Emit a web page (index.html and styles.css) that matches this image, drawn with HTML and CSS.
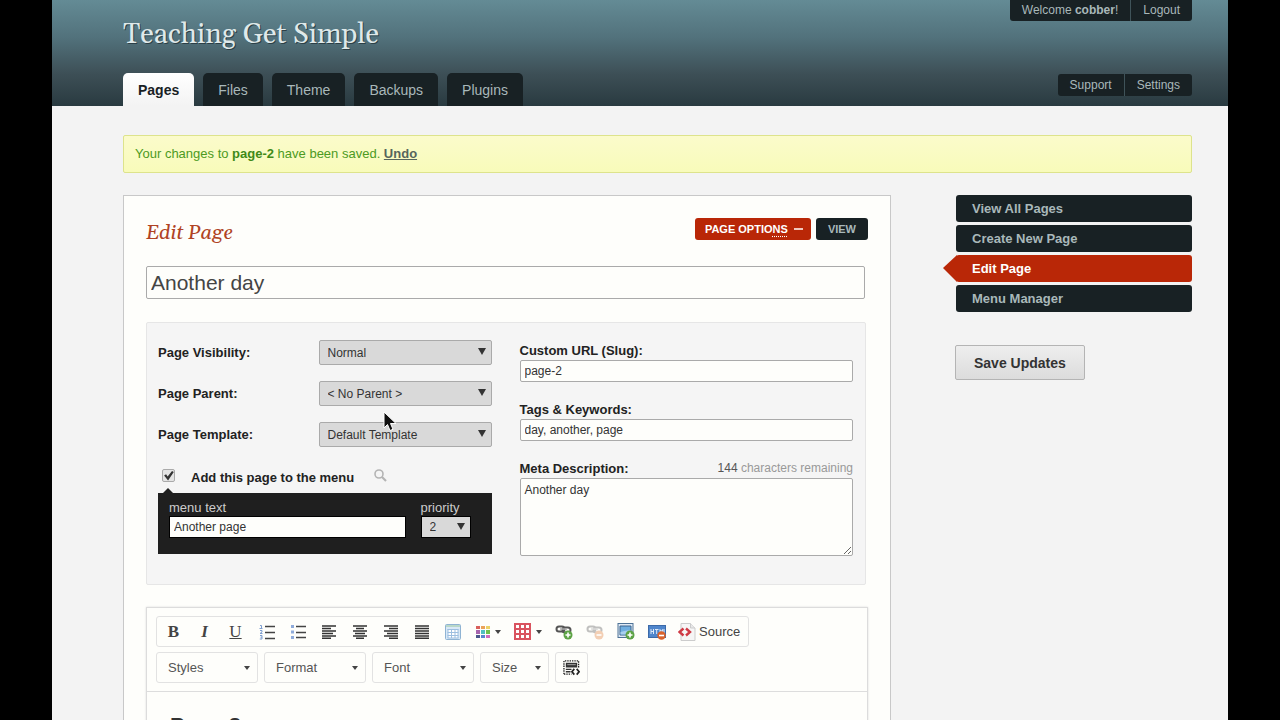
FILE: index.html
```html
<!DOCTYPE html>
<html lang="en">
<head>
  <meta charset="UTF-8" />
  <meta name="viewport" content="width=device-width, initial-scale=1.0"/>
  <title>Edit Page - Teaching Get Simple</title>
  <link rel="stylesheet" href="styles.css">
</head>
<body>
  <header class="header">
    <div class="header-left">
      <h1>Teaching Get Simple</h1>
      <nav class="tabs">
        <a class="current" href="#">Pages</a>
        <a href="#">Files</a>
        <a href="#">Theme</a>
        <a href="#">Backups</a>
        <a href="#">Plugins</a>
      </nav>
    </div>
    <div class="header-right">
      <div class="pill user">
        <span>Welcome <strong>cobber</strong>!</span>
        <a href="#">Logout</a>
      </div>
      <div class="pill links">
        <a href="#">Support</a>
        <a href="#">Settings</a>
      </div>
    </div>
  </header>

  <div class="content">
    <p class="updated">Your changes to <b>page-2</b> have been saved. <a href="#">Undo</a></p>

    <div class="columns">
      <main class="main">
        <div class="main-head">
          <h2>Edit Page</h2>
          <div class="edit-nav">
            <a class="current" href="#">PAGE OPTIO<em>NS</em> <span class="minus"></span></a>
            <a href="#">VIEW</a>
          </div>
        </div>

        <input class="text title" type="text" aria-label="Page title" value="Another day" />

        <div class="options">
          <div class="left-opt">
            <div class="field">
              <label for="private">Page Visibility:</label>
              <span class="select"><select id="private"><option>Normal</option><option>Private</option></select></span>
            </div>
            <div class="field">
              <label for="parent">Page Parent:</label>
              <span class="select"><select id="parent"><option>&lt; No Parent &gt;</option></select></span>
            </div>
            <div class="field">
              <label for="template">Page Template:</label>
              <span class="select"><select id="template"><option>Default Template</option></select></span>
            </div>
            <div class="menu-check">
              <input type="checkbox" id="menu-enable" checked />
              <label for="menu-enable">Add this page to the menu</label>
              <a href="#" aria-label="View menu">
                <svg width="13" height="13" viewBox="0 0 13 13" fill="none" stroke="#b4b4b4"><circle cx="5" cy="5" r="4" stroke-width="1.6"/><path d="M8 8l4 4" stroke-width="2.2"/></svg>
              </a>
            </div>
            <div class="menu-items">
              <div class="menu-text">
                <label for="menu">menu text</label>
                <input class="text" type="text" id="menu" value="Another page" />
              </div>
              <div class="menu-order">
                <label for="order">priority</label>
                <span class="select"><select id="order"><option>2</option></select></span>
              </div>
            </div>
          </div>

          <div class="right-opt">
            <div class="field">
              <label for="slug">Custom URL (Slug):</label>
              <input class="text" type="text" id="slug" value="page-2" />
            </div>
            <div class="field">
              <label for="tags">Tags &amp; Keywords:</label>
              <input class="text" type="text" id="tags" value="day, another, page" />
            </div>
            <div class="field">
              <div class="label-row">
                <label for="meta">Meta Description:</label>
                <span class="countdown"><b>144</b> characters remaining</span>
              </div>
              <textarea class="text" id="meta">Another day</textarea>
            </div>
          </div>
        </div>

        <div class="editor">
          <div class="toolbar">
            <div class="group">
              <button class="tool serif bold" type="button">B</button>
              <button class="tool serif italic" type="button">I</button>
              <button class="tool serif underline" type="button">U</button>
              <button class="tool" type="button" aria-label="Numbered list">
                <svg width="16" height="16" viewBox="0 0 16 16"><path d="M6 2.5h10M6 8.5h10M6 14.5h10" stroke="#444" stroke-width="1.3"/><path d="M1 1.5h1.500v3M.5 4.500h3M1 6.500h2v1.500L1 9.500h2.500M1 11.500h2v3.500H.8M1.500 13.200H3" fill="none" stroke="#7f9fd0"/></svg>
              </button>
              <button class="tool" type="button" aria-label="Bulleted list">
                <svg width="16" height="16" viewBox="0 0 16 16"><path d="M6 2.5h10M6 8.5h10M6 13.5h10" stroke="#444" stroke-width="1.3"/><path d="M1 1h3v3H1zM1 6.500h3v3H1zM1 12h3v3H1z" fill="#8fabdb"/></svg>
              </button>
              <button class="tool" type="button" aria-label="Align left">
                <svg width="14" height="14" viewBox="0 0 14 14" stroke="#333" stroke-width="1.5"><path d="M0 1h14M0 3.500h9M0 6h14M0 8.500h11M0 11h14M0 13.300h9"/></svg>
              </button>
              <button class="tool" type="button" aria-label="Center">
                <svg width="14" height="14" viewBox="0 0 14 14" stroke="#333" stroke-width="1.5"><path d="M0 1h14M3 3.500h8M0 6h14M2 8.500h10M0 11h14M3 13.300h8"/></svg>
              </button>
              <button class="tool" type="button" aria-label="Align right">
                <svg width="14" height="14" viewBox="0 0 14 14" stroke="#333" stroke-width="1.5"><path d="M0 1h14M5 3.500h9M0 6h14M3 8.500h11M0 11h14M5 13.300h9"/></svg>
              </button>
              <button class="tool" type="button" aria-label="Justify">
                <svg width="14" height="14" viewBox="0 0 14 14" stroke="#333" stroke-width="1.5"><path d="M0 1h14M0 3.500h14M0 6h14M0 8.500h14M0 11h14M0 13.300h14"/></svg>
              </button>
              <button class="tool" type="button" aria-label="Table">
                <svg width="16" height="16" viewBox="0 0 16 16"><rect x=".5" y=".5" width="15" height="15" rx="1" fill="#d9e9f7" stroke="#8fb3d3"/><path d="M1 1h14v2H1z" fill="#b9d8c8"/><path d="M3 5h10v9H3z" fill="#fff"/><path d="M2.500 5.500h11M2.500 8.500h11M2.500 11.500h11M2.500 14h11M3 5v9M6.500 5v9M10 5v9M13 5v9" stroke="#9dbfe0" fill="none"/></svg>
              </button>
              <button class="tool wide" type="button" aria-label="Text color">
                <svg width="14" height="14" viewBox="0 0 14 14"><path fill="#d9605c" d="M0 1h4v3H0z"/><path fill="#eba35a" d="M5 1h4v3H5z"/><path fill="#ecd268" d="M10 1h4v3h-4z"/><path fill="#a564ad" d="M0 5h4v4H0z"/><path fill="#52bfc0" d="M5 5h4v4H5z"/><path fill="#71c04e" d="M10 5h4v4h-4z"/><path fill="#4a558a" d="M0 10h4v3H0z"/><path fill="#5b83d0" d="M5 10h4v3H5z"/><path fill="#d06bbd" d="M10 10h4v3h-4z"/></svg>
                <i class="caret"></i>
              </button>
              <button class="tool wide" type="button" aria-label="Background color">
                <svg width="17" height="17" viewBox="0 0 17 17"><path fill="#d9535f" d="M0 0h17v17H0z"/><path fill="#fff" d="M2 2h3v3H2zM7 2h3v3H7zM12 2h3v3h-3zM2 7h3v3H2zM7 7h3v3H7zM12 7h3v3h-3zM2 12h3v3H2zM7 12h3v3H7zM12 12h3v3h-3z"/></svg>
                <i class="caret"></i>
              </button>
              <button class="tool" type="button" aria-label="Link">
                <svg width="18" height="16" viewBox="0 0 18 16"><g fill="none" stroke="#555" stroke-width="2"><rect x="1.500" y="2.500" width="8" height="5" rx="2.500"/><rect x="7.500" y="3.500" width="8" height="5" rx="2.500"/></g><path d="M5 5h7" stroke="#aaa" stroke-width="1.500"/><circle cx="13" cy="11" r="4.500" fill="#5da345"/><path d="M13 8.500v5M10.500 11h5" stroke="#fff" stroke-width="1.600"/></svg>
              </button>
              <button class="tool disabled" type="button" aria-label="Unlink" disabled>
                <svg width="18" height="16" viewBox="0 0 18 16"><g fill="none" stroke="#666" stroke-width="2"><rect x="1.500" y="2.500" width="8" height="5" rx="2.500"/><rect x="7.500" y="3.500" width="8" height="5" rx="2.500"/></g><path d="M5 5h7" stroke="#aaa" stroke-width="1.500"/><circle cx="13" cy="11" r="4.500" fill="#e58a4c"/><path d="M10.500 11h5" stroke="#fff" stroke-width="1.600"/></svg>
              </button>
              <button class="tool" type="button" aria-label="Image">
                <svg width="18" height="17" viewBox="0 0 18 17"><rect x="1" y=".5" width="15" height="14" fill="#dfeaf5" stroke="#4e7296"/><path d="M3 3h11v9H3z" fill="#6faee0" stroke="#3a628c"/><path d="M3.500 9l4-1 6-1v4.500h-10z" fill="#a8cfee"/><circle cx="13" cy="12" r="4.500" fill="#5da345"/><path d="M13 9.500v5M10.500 12h5" stroke="#fff" stroke-width="1.600"/></svg>
              </button>
              <button class="tool" type="button" aria-label="Remove format">
                <svg width="18" height="16" viewBox="0 0 18 16"><rect x=".5" y="1.500" width="17" height="12" fill="#4f86cc" stroke="#3c6aa8"/><path d="M3 5v5M5.500 5v5M3 7.500h2.500M7 5.500h3.500M8.700 5.500V10M12 10V5.500l1.300 2 1.300-2V10M16 5v5" fill="none" stroke="#dfeaf8"/><circle cx="13.500" cy="11.500" r="4.200" fill="#d9622b"/><path d="M11 11.500h5" stroke="#fff" stroke-width="1.600"/></svg>
              </button>
              <button class="tool source" type="button">
                <svg width="18" height="18" viewBox="0 0 18 18"><path d="M3 .5h9.500l4.500 4.500v12.500H3z" fill="#f6f6f6" stroke="#ccc"/><path d="M12.500.5v4.500H17" fill="#e8e8e8" stroke="#ccc"/><path d="M5.500 5.500L1.500 9l4 3.500M8 5.500l4 3.500-4 3.500" fill="none" stroke="#cf3a45" stroke-width="2.400"/></svg>
                Source
              </button>
            </div>
            <div class="combos">
              <button class="combo" type="button">Styles <i class="caret"></i></button>
              <button class="combo" type="button">Format <i class="caret"></i></button>
              <button class="combo" type="button">Font <i class="caret"></i></button>
              <button class="combo small" type="button">Size <i class="caret"></i></button>
              <button class="combo icon" type="button" aria-label="Show blocks">
                <svg width="18" height="17" viewBox="0 0 18 17"><path d="M1 15.500V1.500h15.500v8M1 15.500h8" fill="none" stroke="#222" stroke-width="1.400" stroke-dasharray="1.500 1"/><path d="M3 3.500h12v5H3z" fill="#333"/><path d="M4.500 5.500h9" stroke="#aaa"/><path d="M3 10.500h6M3 13h5" stroke="#333" stroke-width="1.500"/><path d="M12 10L9.500 13l2.500 3M14.500 10l2.500 3-2.500 3" fill="none" stroke="#222" stroke-width="1.800"/></svg>
              </button>
            </div>
          </div>
          <div class="edit-body">
            <h2>Page 2</h2>
          </div>
        </div>
      </main>

      <aside class="sidebar">
        <nav class="snav">
          <a href="#">View All Pages</a>
          <a href="#">Create New Page</a>
          <a class="current" href="#">Edit Page</a>
          <a href="#">Menu Manager</a>
        </nav>
        <button class="submit" type="button">Save Updates</button>
      </aside>
    </div>
  </div>

  <svg class="cursor" width="14" height="21" viewBox="0 0 14 21"><path d="M1 1v16l3.500-3.500L7 19.500l3-1.200-2.500-5.800H13z" fill="#111" stroke="#fff"/></svg>
</body>
</html>
```
FILE: styles.css
```css
* {
  margin: 0; padding: 0; box-sizing: border-box;
}
html {
  background: #000;
}
body {
  margin: 0 52px;
  min-height: 100vh;
  background: #f3f3f3;
  font-family: "Liberation Sans", Arial, sans-serif;
  font-size: 13px;
  line-height: 18px;
  color: #333;
}
input, select, textarea, button {
  font-family: inherit;
  color: #333;
}
a {
  text-decoration: none;
}

/* header */
.header {
  display: flex;
  justify-content: space-between;
  height: 106px;
  padding: 0 36px 0 71px;
  background: linear-gradient(#648b95, #52727c 35%, #3d4f56 70%, #293a40);
}
.header-left, .header-right {
  display: flex;
  flex-direction: column;
  justify-content: space-between;
}
.header-right {
  align-items: flex-end;
  padding-bottom: 10px;
}
h1 {
  padding-top: 17px;
  font-family: Georgia, Gelasio, "DejaVu Serif", serif;
  font-size: 28px;
  line-height: 36px;
  font-weight: normal;
  color: #dfe9ea;
  text-shadow: 1px 1px 0 #2c3f46;
}
.tabs {
  display: flex;
  gap: 9px;
}
.tabs a {
  padding: 1px 15px 0;
  font-size: 14px;
  line-height: 32px;
  color: #a9b8ba;
  background: #182124;
  border-radius: 5px 5px 0 0;
}
.tabs .current {
  color: #182124;
  font-weight: bold;
  background: linear-gradient(#fff, #f3f3f3);
}
.pill {
  display: flex;
  font-size: 12px;
  border-radius: 3px;
  overflow: hidden;
  line-height: 22px;
}
.pill > * {
  padding: 0 12px;
  background: #182124;
  color: #a9b8ba;
}
.pill > * + * {
  border-left: 1px solid #3f5359;
}
.user {
  line-height: 21px;
  border-radius: 0 0 3px 3px;
}

/* content */
.content {
  padding: 29px 36px 0 71px;
}
.updated {
  padding: 9px 11px;
  margin-bottom: 22px;
  color: #4c9a22;
  background: linear-gradient(#fbfbcb, #f8fbba);
  border: 1px solid #dde38c;
  border-radius: 2px;
}
.updated b {
  color: #408a18;
}
.updated a {
  color: #56655c;
  font-weight: bold;
  text-decoration: underline;
}
.columns {
  display: flex;
  align-items: flex-start;
  gap: 64px;
}
.main {
  flex: 1;
  min-width: 0;
  padding: 22px 22px 40px;
  background: #fefefb;
  border: 1px solid #c8c8c8;
}
.main-head {
  display: flex;
  justify-content: space-between;
  align-items: flex-start;
  height: 48px;
}
.main-head h2 {
  font-family: Georgia, Gelasio, "DejaVu Serif", serif;
  font-size: 20px;
  line-height: 30px;
  font-style: italic;
  font-weight: normal;
  color: #b04324;
}
.edit-nav {
  display: flex;
  gap: 5px;
}
.edit-nav a {
  padding: 0 12px;
  font-size: 11px;
  line-height: 22px;
  font-weight: bold;
  color: #a9b8ba;
  background: #182124;
  border-radius: 3px;
}
.edit-nav .current {
  padding: 0 8px 0 10px;
  color: #fff;
  background: #b92707;
}
.edit-nav em {
  font-style: normal;
  text-decoration: underline dotted;
  text-underline-offset: 3px;
}
.minus {
  display: inline-block;
  width: 9px;
  height: 2px;
  margin-left: 3px;
  vertical-align: 3px;
  background: #f0c8bd;
}

/* form */
.text {
  display: block;
  width: 100%;
  height: 22px;
  padding: 0 4px;
  font-size: 12px;
  background: #fefefb;
  border: 1px solid #aaa;
  border-radius: 2px;
}
.title {
  width: calc(100% - 3px);
  height: 33px;
  font-size: 21px;
  color: #444;
}
.options {
  display: grid;
  grid-template-columns: 1fr 1fr;
  gap: 28px;
  margin: 23px 2px 22px 0;
  padding: 17px 12px 28px 11px;
  background: #f5f5f5;
  border: 1px solid #e6e6e6;
  border-radius: 2px;
}
.options label {
  font-weight: bold;
  color: #222;
}
.left-opt .field {
  display: flex;
  justify-content: space-between;
  align-items: center;
  height: 25px;
  margin-bottom: 16px;
}
.select {
  position: relative;
  width: 173px;
}
.select::after {
  content: "";
  position: absolute;
  right: 6px;
  top: 8px;
  border: 4px solid transparent;
  border-top: 7px solid #333;
  border-bottom: 0;
  pointer-events: none;
}
select {
  appearance: none;
  display: block;
  width: 100%;
  height: 25px;
  padding: 0 8px;
  font-size: 12px;
  background: #d9d9d9;
  border: 1px solid #aaa;
  border-radius: 2px;
}
.menu-check {
  display: flex;
  align-items: center;
  height: 30px;
  padding-left: 4px;
}
.menu-check input {
  appearance: none;
  width: 13px;
  height: 13px;
  margin-bottom: 5px;
  border: 1px solid #aaa;
  border-radius: 2px;
  background: #e4e4e4;
}
.menu-check input:checked::before {
  content: "";
  display: block;
  height: 11px;
  background: #333;
  clip-path: polygon(10% 50%, 28% 38%, 42% 58%, 82% 8%, 98% 18%, 46% 95%);
}
.menu-check label {
  margin: 0 20px 0 16px;
}
.menu-check svg {
  display: block;
  margin-bottom: 5px;
}
.menu-items {
  position: relative;
  display: flex;
  gap: 15px;
  padding: 6px 21px 16px 11px;
  color: #ccc;
  background: #1f1f1f;
}
.menu-items::before {
  content: "";
  position: absolute;
  left: 5px;
  top: -5px;
  border: 5px solid transparent;
  border-top: 0;
  border-bottom-color: #1f1f1f;
}
.menu-items label {
  display: block;
  font-weight: normal;
  line-height: 17px;
  color: #ccc;
}
.menu-text {
  flex: 1;
}
.menu-items .text, .menu-items select {
  height: 22px;
  border-color: #000;
  border-radius: 0;
}
.menu-items .select {
  display: block;
  width: 50px;
}
.menu-items .select::after {
  top: 7px;
}
.right-opt {
  padding-top: 1px;
}
.right-opt .field {
  margin-bottom: 18px;
}
.right-opt .field:last-child {
  margin-bottom: 0;
}
.right-opt label {
  display: block;
  line-height: 19px;
}
.label-row {
  display: flex;
  justify-content: space-between;
  color: #999;
}
.countdown {
  font-size: 12px;
}
.countdown b {
  font-weight: normal;
  color: #555;
}
textarea.text {
  height: 78px;
  padding: 4px;
  line-height: 15px;
  resize: vertical;
}

/* editor */
.editor {
  border: 1px solid #dcdcdc;
  box-shadow: 0 0 2px #ddd;
}
.toolbar {
  padding: 8px 9px;
  border-bottom: 1px solid #ddd;
}
.group {
  display: inline-flex;
  padding: 0 1px;
  border: 1px solid #e2e2e2;
  border-radius: 3px;
}
.tool {
  display: flex;
  justify-content: center;
  align-items: center;
  width: 31px;
  height: 29px;
  color: #444;
  border: 0;
  background: none;
}
.wide {
  width: 40px;
  gap: 5px;
}
.disabled {
  opacity: 0.4;
}
.serif {
  font-family: "Liberation Serif", serif;
  font-size: 17px;
}
.bold {
  font-weight: bold;
}
.italic {
  font-style: italic;
  font-weight: bold;
}
.underline {
  text-decoration: underline;
}
.source {
  width: auto;
  gap: 3px;
  padding: 0 7px 0 6px;
  font-size: 13px;
}
.caret {
  border: 3px solid transparent;
  border-top: 4px solid #444;
  border-bottom: 0;
}
.combos {
  display: flex;
  gap: 6px;
  margin-top: 5px;
}
.combo {
  display: flex;
  justify-content: space-between;
  align-items: center;
  width: 102px;
  height: 31px;
  padding: 0 7px 0 11px;
  font-size: 13px;
  color: #555;
  background: none;
  border: 1px solid #e2e2e2;
  border-radius: 3px;
}
.combo.small {
  width: 69px;
}
.combo.icon {
  width: 33px;
  padding: 0 7px;
}
.edit-body {
  padding: 20px 23px;
  background: #fefefb;
}
.edit-body h2 {
  font-size: 22px;
  line-height: 28px;
}

/* sidebar */
.sidebar {
  width: 237px;
}
.snav {
  display: flex;
  flex-direction: column;
  gap: 3px;
  margin-left: 1px;
}
.snav a {
  position: relative;
  padding-left: 16px;
  line-height: 27px;
  font-weight: bold;
  color: #a9b8ba;
  background: #182124;
  border-radius: 3px;
}
.snav .current {
  color: #fff;
  background: #b92707;
}
.snav .current::before {
  content: "";
  position: absolute;
  left: -13px;
  top: 0;
  border: solid transparent;
  border-width: 13px 14px 14px 0;
  border-right-color: #b92707;
}
.submit {
  height: 35px;
  margin-top: 33px;
  padding: 0 18px;
  font-size: 14px;
  font-weight: bold;
  background: linear-gradient(#eee, #dcdcdc);
  border: 1px solid #b4b4b4;
  border-radius: 2px;
}

/* mouse pointer */
.cursor {
  position: absolute;
  left: 383px;
  top: 411px;
}
```
